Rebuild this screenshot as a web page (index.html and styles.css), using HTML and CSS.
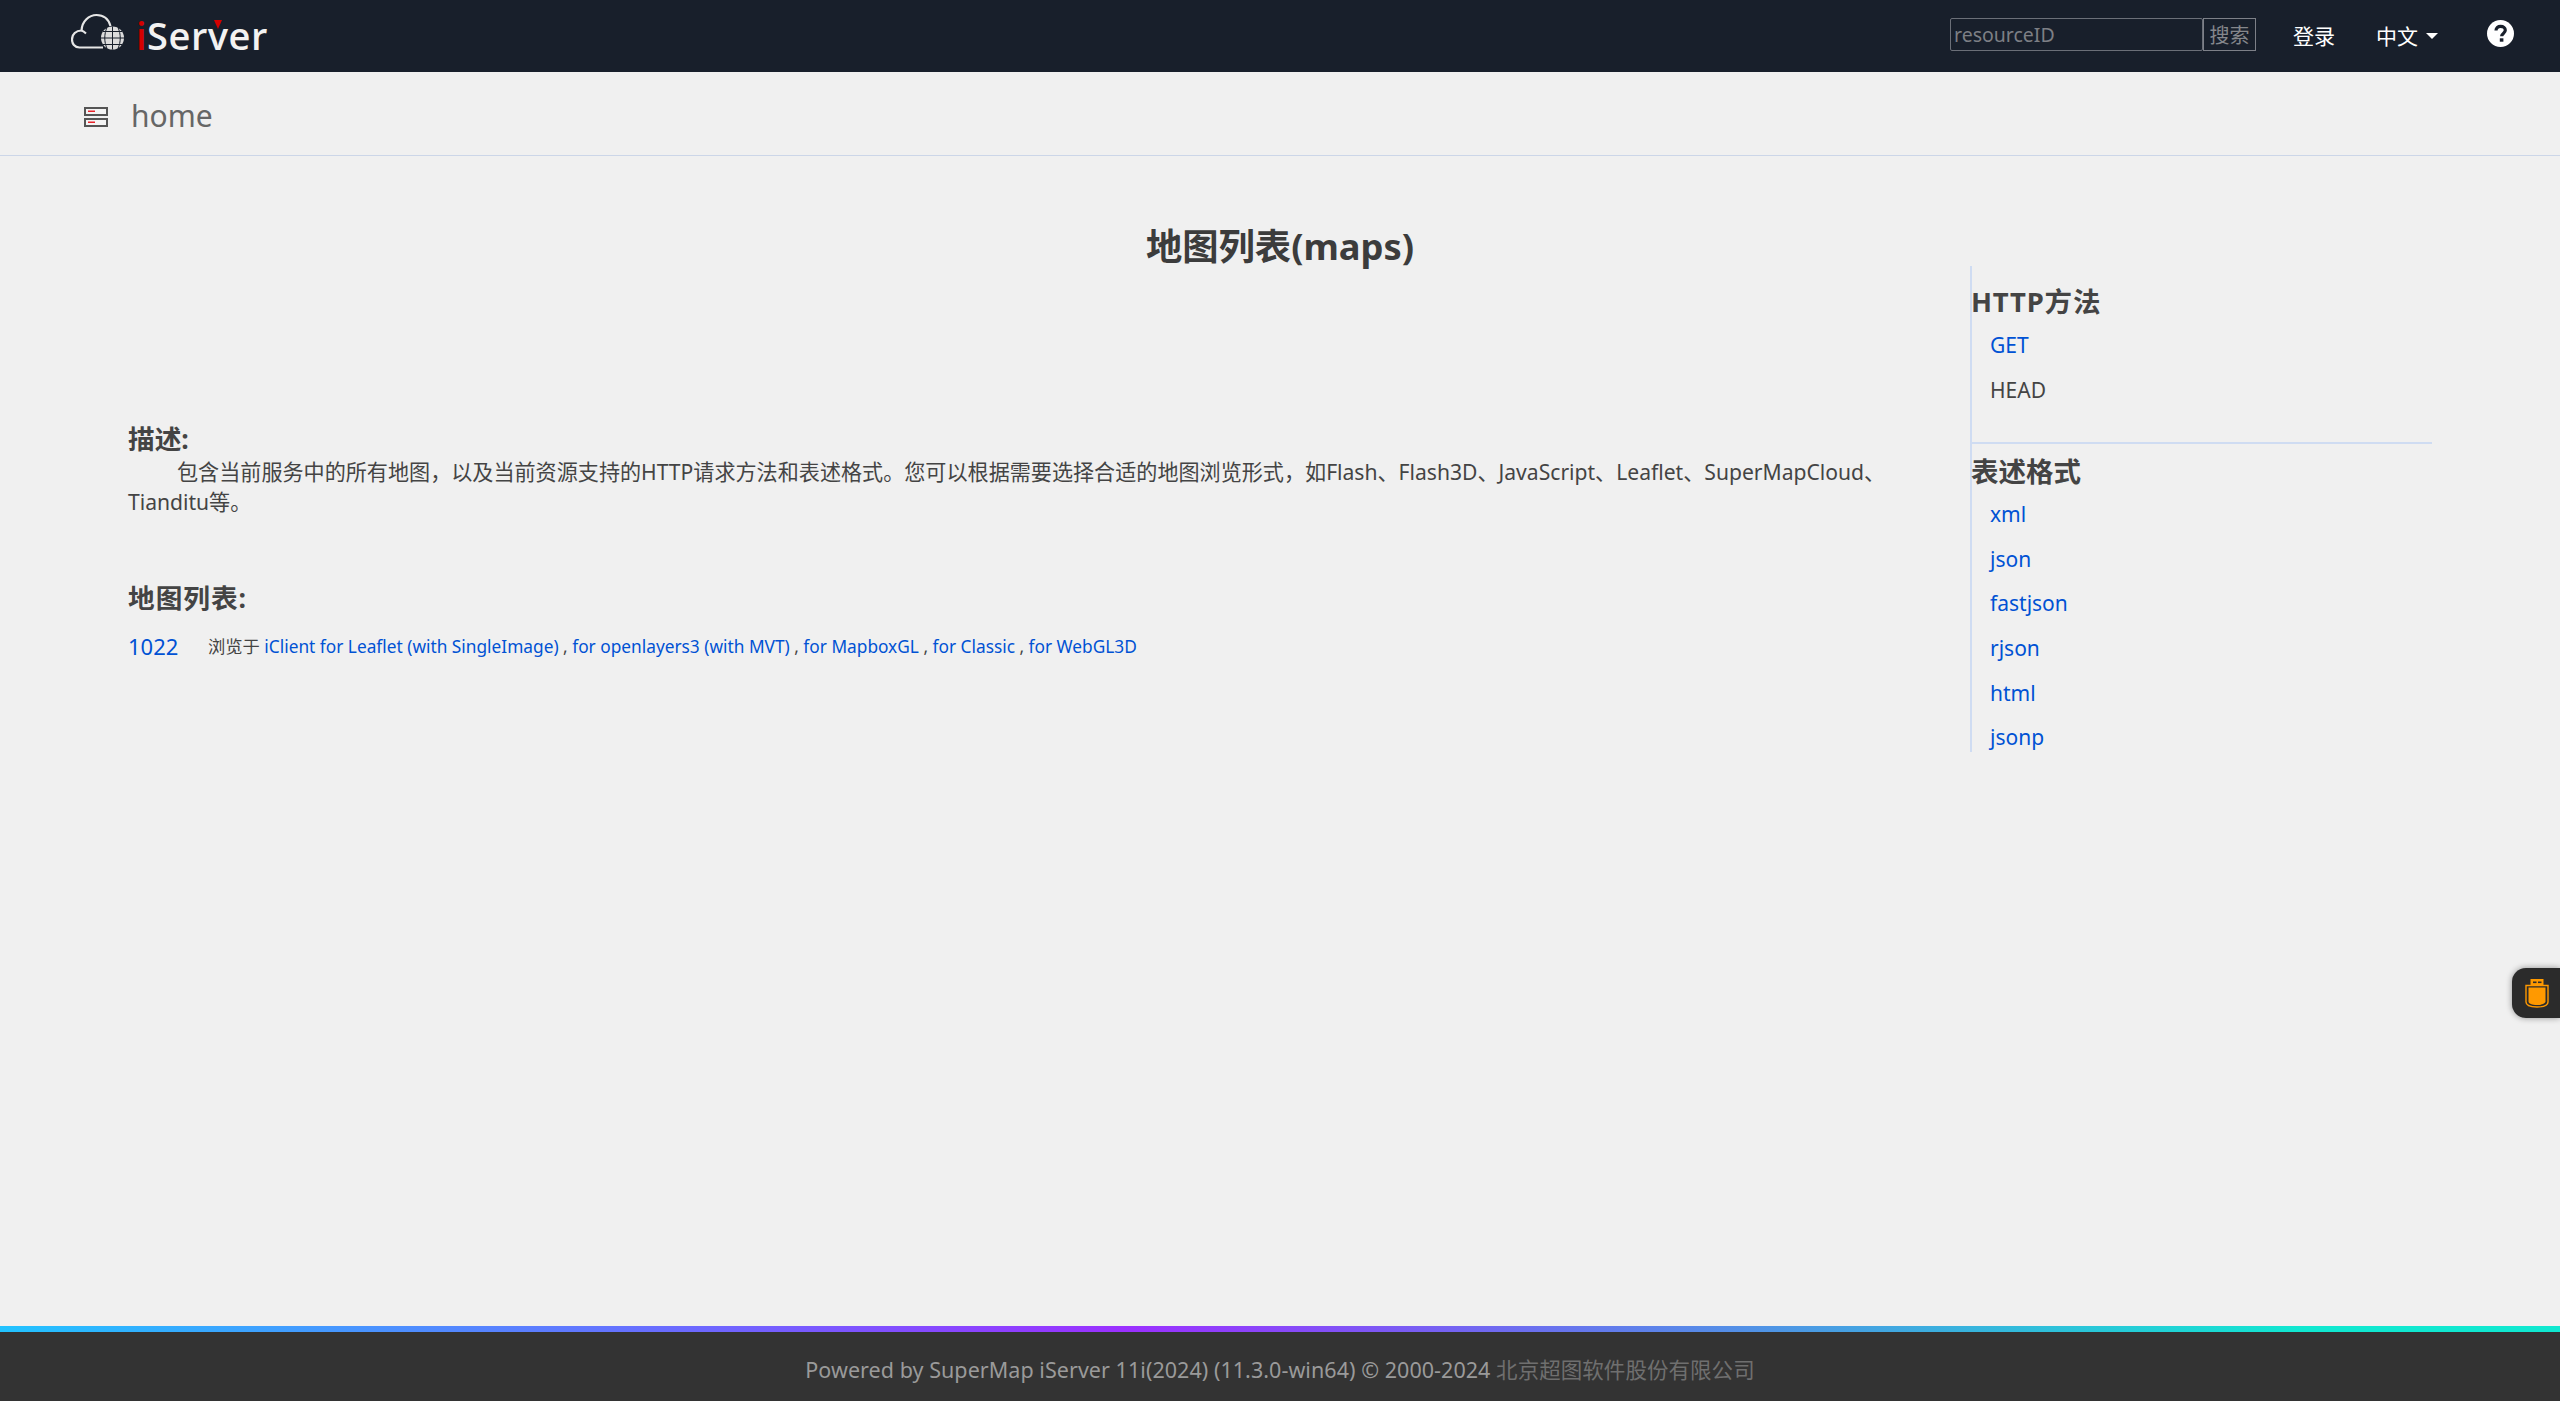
FILE: index.html
```html
<!DOCTYPE html>
<html lang="zh-CN">
<head>
    <meta charset="UTF-8">
    <meta name="viewport" content="width=device-width, initial-scale=1.0">
    <title>地图列表(maps)</title>
    <link rel="stylesheet" href="styles.css">
</head>
<body>
    <header class="topbar">
        <a class="logo" href="#">
            <svg class="logo-cloud" width="56" height="40" viewBox="0 0 56 40">
                <path d="M32 34.500H8.500C3.500 34.500 1 30.500 1 26.500C1 21 5 17.500 10.500 17.500C11 8 18 2 25.500 2C32.500 2 37.500 6 39.500 13" fill="none" stroke="#e6e6e6" stroke-width="2.200"/>
                <path d="M10.500 17.500C12 18 13.500 19 15 20.500" fill="none" stroke="#e6e6e6" stroke-width="2"/>
                <circle cx="41.500" cy="25" r="11.500" fill="#dcdcdc"/>
                <path d="M30 25H53M32 18.500H51M32 31.500H51M41.500 13.500V36.500M36 14.500C33 21 33 29 36 35.500M47 14.500C50 21 50 29 47 35.500" fill="none" stroke="#181f2b" stroke-width="1"/>
            </svg>
            <span class="logo-text"><span class="logo-i">i</span>Server<span class="logo-mark"></span></span>
        </a>
        <div class="topbar-right">
            <form class="search">
                <input class="search-input" type="text" placeholder="resourceID">
                <button class="search-btn" type="button">搜索</button>
            </form>
            <a class="nav-link login" href="#">登录</a>
            <a class="nav-link lang" href="#">中文<span class="caret"></span></a>
            <a class="help" href="#">
                <svg width="27" height="27" viewBox="0 0 27 27">
                    <circle cx="13.500" cy="13.500" r="13.500" fill="#fff"/>
                    <path d="M9 10.500C9 7.800 11 6.300 13.600 6.300C16.300 6.300 18.300 7.900 18.300 10.300C18.300 13.300 14.600 13.500 14.600 16.200" fill="none" stroke="#181f2b" stroke-width="3.200"/>
                    <rect x="12.800" y="18.300" width="3.600" height="3.400" fill="#181f2b"/>
                </svg>
            </a>
        </div>
    </header>

    <div class="crumb">
        <svg class="crumb-icon" width="24" height="20" viewBox="0 0 24 20">
            <rect x="1" y="1" width="22" height="7" fill="#f4f4f4" stroke="#555" stroke-width="2"/>
            <rect x="1" y="12" width="22" height="7" fill="#f4f4f4" stroke="#555" stroke-width="2"/>
            <rect x="4" y="3.500" width="7" height="1.500" fill="#e8232a"/>
            <rect x="4" y="14.500" width="7" height="1.500" fill="#e8232a"/>
        </svg>
        <span class="crumb-text">home</span>
    </div>

    <main class="main">
        <h1 class="page-title">地图列表(maps)</h1>
        <div class="columns">
            <section class="content">
                <h2 class="desc-title">描述:</h2>
                <p class="desc">包含当前服务中的所有地图，以及当前资源支持的HTTP请求方法和表述格式。您可以根据需要选择合适的地图浏览形式，如Flash、Flash3D、JavaScript、Leaflet、SuperMapCloud、Tianditu等。</p>
                <h2 class="list-title">地图列表:</h2>
                <div class="map-row">
                    <a class="map-name" href="#">1022</a>
                    <span class="map-links">浏览于 <a href="#">iClient for Leaflet (with SingleImage)</a> , <a href="#">for openlayers3 (with MVT)</a> , <a href="#">for MapboxGL</a> , <a href="#">for Classic</a> , <a href="#">for WebGL3D</a></span>
                </div>
            </section>
            <aside class="sidebar">
                <div class="side-group side-first">
                    <h3>HTTP方法</h3>
                    <ul>
                        <li><a href="#">GET</a></li>
                        <li>HEAD</li>
                    </ul>
                </div>
                <div class="side-group side-second">
                    <h3>表述格式</h3>
                    <ul>
                        <li><a href="#">xml</a></li>
                        <li><a href="#">json</a></li>
                        <li><a href="#">fastjson</a></li>
                        <li><a href="#">rjson</a></li>
                        <li><a href="#">html</a></li>
                        <li><a href="#">jsonp</a></li>
                    </ul>
                </div>
            </aside>
        </div>
    </main>

    <footer class="footer">
        <div class="footer-line"></div>
        <div class="footer-text">Powered by SuperMap iServer 11i(2024) (11.3.0-win64) © 2000-2024 <a href="#">北京超图软件股份有限公司</a></div>
    </footer>

    <div class="float-tab">
        <svg width="24" height="30" viewBox="0 0 24 30">
            <path d="M5.500 8V1H18.500V8" fill="#f90"/>
            <rect x="8" y="3.500" width="3.500" height="1.600" fill="#2b2b2b"/>
            <rect x="13" y="3.500" width="3.500" height="1.600" fill="#2b2b2b"/>
            <path d="M1 7.500H23V24C23 27 19 29 12 29C5 29 1 27 1 24Z" fill="none" stroke="#f90" stroke-width="1.400"/>
            <path d="M3.500 9.500H20.500V23.500C20.500 25.500 17 27 12 27C7 27 3.500 25.500 3.500 23.500Z" fill="#f90"/>
        </svg>
    </div>
</body>
</html>
```

FILE: styles.css
```css
* {
    box-sizing: border-box;
}
html, body {
    height: 100%;
}
body {
    margin: 0;
    display: flex;
    flex-direction: column;
    font-family: "Noto Sans", "Noto Sans CJK SC", sans-serif;
    font-size: 21px;
    color: #444;
    background-color: #f0f0f0;
    overflow: hidden;
}
a {
    color: #0052d4;
    text-decoration: none;
}
.topbar {
    height: 72px;
    flex: none;
    display: flex;
    justify-content: space-between;
    background-color: #181f2b;
    padding: 0 0 0 71px;
}
.logo {
    display: flex;
    align-items: flex-start;
    padding-top: 13px;
    gap: 9px;
}
.logo-text {
    position: relative;
    font-family: "Open Sans", sans-serif;
    font-size: 38px;
    font-weight: 600;
    line-height: 44px;
    color: #f2f2f2;
    letter-spacing: 0.500px;
}
.logo-i {
    color: #d40000;
}
.logo-mark {
    position: absolute;
    left: 78px;
    top: 7px;
    border-left: 4px solid transparent;
    border-right: 4px solid transparent;
    border-top: 9px solid #d40000;
}
.topbar-right {
    display: flex;
    align-items: flex-start;
    padding-right: 46px;
}
.search {
    display: flex;
    margin-top: 18px;
    margin-right: 37px;
}
.search-input {
    width: 253px;
    height: 33px;
    padding: 0 3px;
    background: transparent;
    border: 1px solid #6b6f78;
    border-radius: 2px;
    font-family: inherit;
    font-size: 19.500px;
    color: #aaa;
}
.search-input::placeholder {
    color: #7d7f85;
}
.search-btn {
    width: 53px;
    height: 33px;
    padding: 0;
    background: transparent;
    border: 1px solid #7d8088;
    font-family: inherit;
    font-size: 20px;
    color: #85878c;
}
.nav-link {
    color: #fff;
    line-height: 30px;
    margin-top: 21px;
}
.login {
    margin-right: 41px;
}
.lang {
    display: flex;
    align-items: center;
    margin-right: 49px;
}
.caret {
    margin-left: 8px;
    border-left: 6px solid transparent;
    border-right: 6px solid transparent;
    border-top: 6px solid #fff;
}
.help {
    margin-top: 20px;
    height: 27px;
}
.crumb {
    height: 84px;
    flex: none;
    display: flex;
    align-items: center;
    padding: 3px 0 0 84px;
    border-bottom: 1px solid #ccd6e8;
}
.crumb-icon {
    margin-top: 4px;
    margin-right: 23px;
}
.crumb-text {
    font-size: 30px;
    color: #666;
}
.main {
    flex: 1;
    min-height: 0;
}
.page-title {
    margin: 0;
    height: 110px;
    padding-top: 65px;
    font-size: 36.300px;
    line-height: 50px;
    font-weight: 700;
    color: #3c3c3c;
    text-align: center;
}
.columns {
    display: flex;
    padding-left: 128px;
}
.content {
    width: 1842px;
    padding-right: 60px;
}
.desc-title, .list-title {
    margin: 0;
    font-size: 26.670px;
    line-height: 36px;
    font-weight: 700;
}
.desc-title {
    margin-top: 155px;
}
.desc {
    margin: 0;
    font-size: 21.100px;
    line-height: 30px;
    text-indent: 49px;
}
.list-title {
    margin-top: 63px;
    letter-spacing: 1px;
}
.map-row {
    display: flex;
    align-items: center;
    margin-top: 16px;
    line-height: 30px;
}
.map-name {
    font-size: 22px;
    width: 80px;
    margin-top: -2px;
}
.map-links {
    font-size: 17.300px;
}
.sidebar {
    width: 462px;
    height: 486px;
    border-left: 2px solid #cfdcf2;
}
.side-group h3 {
    margin: 0 0 0 -1px;
    font-size: 27.500px;
    line-height: 38px;
    font-weight: 700;
}
.side-first h3 {
    letter-spacing: 0.800px;
}
.side-first {
    padding-top: 17px;
    height: 178px;
    border-bottom: 2px solid #cfdcf2;
}
.side-group ul {
    margin: 2px 0 0;
    padding: 0 0 0 18px;
    list-style: none;
}
.side-second ul {
    margin-top: 1px;
}
.side-group li {
    height: 44.700px;
    line-height: 44.700px;
}
.side-second {
    padding-top: 9px;
}
.footer {
    height: 75px;
    flex: none;
    background-color: #333;
}
.footer-line {
    height: 6px;
    background: linear-gradient(90deg, #22c3ff 0%, #9b30ff 44%, #10e8d0 90%, #10e8d0 100%);
}
.footer-text {
    padding-top: 6px;
    text-align: center;
    font-size: 21.500px;
    letter-spacing: 0.050px;
    line-height: 63px;
    color: #9a9a9a;
}
.footer-text a {
    color: #6f6f6f;
}
.float-tab {
    position: absolute;
    right: 0;
    top: 968px;
    width: 48px;
    height: 50px;
    padding: 10px 0 0 13px;
    background-color: #2b2b2b;
    border-radius: 14px 0 0 14px;
    box-shadow: 0 0 6px rgba(0,0,0,0.4);
}
```
